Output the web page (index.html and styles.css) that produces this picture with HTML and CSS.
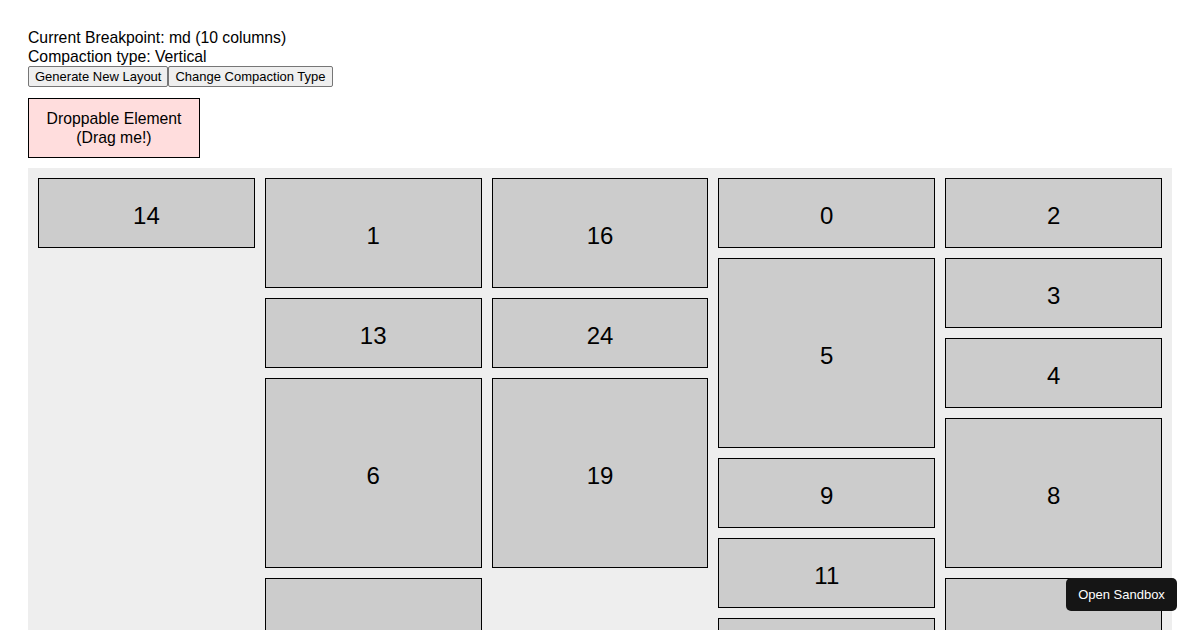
FILE: index.html
```html
<!DOCTYPE html>
<html>
<head>
<meta charset="utf-8">
<link rel="stylesheet" href="styles.css">
</head>
<body>
<div class="page">
  <div class="line">Current Breakpoint: md (10 columns)</div>
  <div class="line">Compaction type: Vertical</div>
  <div class="actions"><button class="btn">Generate New Layout</button><button class="btn">Change Compaction Type</button></div>
  <div class="droppable">Droppable Element<br>(Drag me!)</div>
  <div class="grid">
    <div class="item c0 r0 h2"><span>14</span></div>
    <div class="item c2 r0 h3"><span>1</span></div>
    <div class="item c2 r3 h2"><span>13</span></div>
    <div class="item c2 r5 h5"><span>6</span></div>
    <div class="item c2 r10 h4"></div>
    <div class="item c4 r0 h3"><span>16</span></div>
    <div class="item c4 r3 h2"><span>24</span></div>
    <div class="item c4 r5 h5"><span>19</span></div>
    <div class="item c6 r0 h2"><span>0</span></div>
    <div class="item c6 r2 h5"><span>5</span></div>
    <div class="item c6 r7 h2"><span>9</span></div>
    <div class="item c6 r9 h2"><span>11</span></div>
    <div class="item c6 r11 h3"></div>
    <div class="item c8 r0 h2"><span>2</span></div>
    <div class="item c8 r2 h2"><span>3</span></div>
    <div class="item c8 r4 h2"><span>4</span></div>
    <div class="item c8 r6 h4"><span>8</span></div>
    <div class="item c8 r10 h4"></div>
  </div>
</div>
<a class="sandbox">Open Sandbox</a>
</body>
</html>
```
FILE: styles.css
```css
html, body {
  margin: 0;
  padding: 0;
  background: #fff;
}
body {
  font-family: "Liberation Sans", Arial, sans-serif;
  font-size: 15.75px;
  color: #000;
  height: 630px;
  overflow: hidden;
}
.page {
  padding: 28px 28px 0 28px;
}
.line {
  line-height: 19px;
}
.actions {
  display: flex;
}
.btn {
  font-family: "Liberation Sans", Arial, sans-serif;
  font-size: 13px;
  line-height: 15px;
  padding: 2px 6px;
  background: #efefef;
  border: 1px solid #767676;
  border-radius: 2px;
  color: #000;
  margin: 0;
}
.droppable {
  width: 150px;
  padding: 10px;
  margin: 11px 0 10px 0;
  text-align: center;
  background: #fdd;
  border: 1px solid #000;
  line-height: 19px;
}
.grid {
  background: #eee;
  display: grid;
  grid-template-columns: repeat(10, 1fr);
  grid-auto-rows: 30px;
  gap: 10px;
  padding: 10px;
  height: 442px;
  overflow: hidden;
}
.item {
  background: #ccc;
  border: 1px solid #000;
  display: flex;
  align-items: center;
  justify-content: center;
  font-size: 24px;
  padding-top: 5px;
  box-sizing: border-box;
}
.c0 { grid-column: 1 / span 2; }
.c2 { grid-column: 3 / span 2; }
.c4 { grid-column: 5 / span 2; }
.c6 { grid-column: 7 / span 2; }
.c8 { grid-column: 9 / span 2; }
.r0 { grid-row-start: 1; }
.r2 { grid-row-start: 3; }
.r3 { grid-row-start: 4; }
.r4 { grid-row-start: 5; }
.r5 { grid-row-start: 6; }
.r6 { grid-row-start: 7; }
.r7 { grid-row-start: 8; }
.r9 { grid-row-start: 10; }
.r10 { grid-row-start: 11; }
.r11 { grid-row-start: 12; }
.h2 { grid-row-end: span 2; }
.h3 { grid-row-end: span 3; }
.h4 { grid-row-end: span 4; }
.h5 { grid-row-end: span 5; }
.sandbox {
  position: fixed;
  right: 23px;
  bottom: 19px;
  width: 111px;
  height: 33px;
  box-sizing: border-box;
  background: #151515;
  color: #fff;
  border-radius: 5px;
  font-family: "Liberation Sans", Arial, sans-serif;
  font-size: 13px;
  display: flex;
  align-items: center;
  justify-content: center;
}
```
